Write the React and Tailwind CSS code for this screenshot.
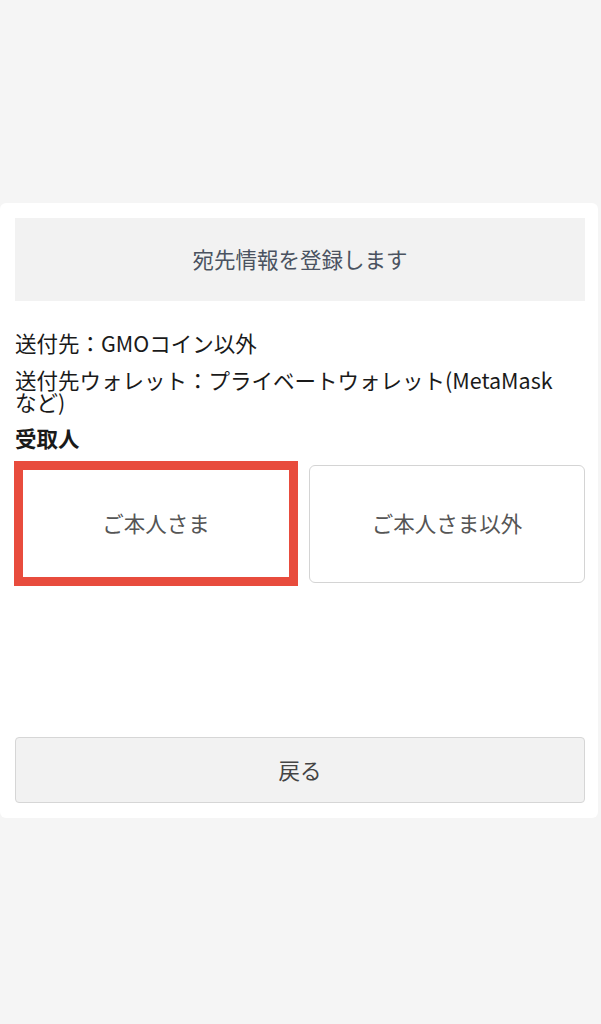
export default function App() {
  const font = { fontFamily: '"Noto Sans CJK JP", "Noto Sans", sans-serif' };
  return (
    <div className="min-h-[1024px] bg-[#f5f5f5] pt-[203px]" style={font}>
      <div className="bg-white rounded-[6px] mr-[3px] pl-[15px] pr-[13px] pt-[15px] pb-[15px]">
        <div className="h-[83px] bg-[#f2f2f2] flex items-center justify-center text-[21.5px] text-[#4a5260]">
          宛先情報を登録します
        </div>
        <div className="mt-[31px] text-[21.5px] leading-[22px] text-[#1a1a1a]">
          <p>送付先：GMOコイン以外</p>
          <p className="mt-[15px]">
            送付先ウォレット：プライベートウォレット(MetaMask
            <br />
            など)
          </p>
          <p className="mt-[14px] font-bold">受取人</p>
        </div>
        <div className="mt-[12px] flex items-center gap-[11px]">
          <button className="-ml-px w-[284px] h-[125px] border-[9px] border-[#e84c3d] bg-white flex items-center justify-center text-[21.5px] text-[#555]">
            ご本人さま
          </button>
          <button className="flex-1 h-[118px] border border-[#d4d4d4] rounded-[6px] bg-white flex items-center justify-center text-[21.5px] text-[#555]">
            ご本人さま以外
          </button>
        </div>
        <button className="mt-[151px] w-full h-[66px] bg-[#f2f2f2] border border-[#d6d6d6] rounded-[4px] flex items-center justify-center text-[21.5px] text-[#444]">
          戻る
        </button>
      </div>
    </div>
  );
}
